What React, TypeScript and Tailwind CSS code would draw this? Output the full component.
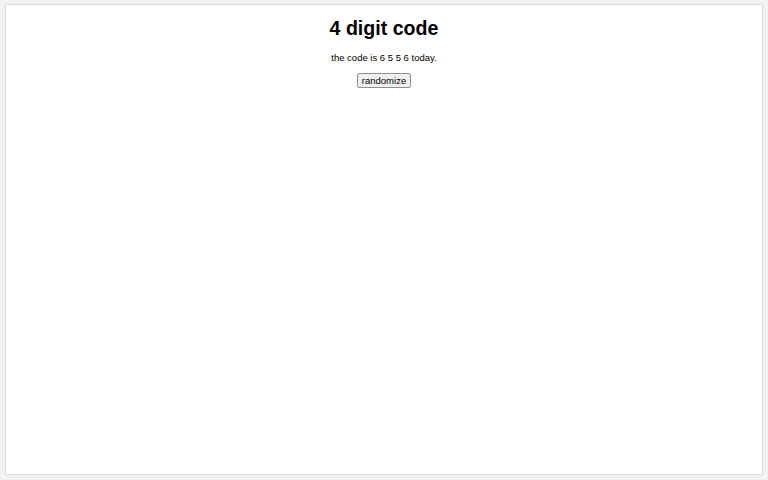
import React from "react";

export default function App() {
  return (
    <div className="w-[768px] h-[480px] bg-[#f2f2f2] p-[5px] pt-[4px] font-['Liberation_Sans',Arial,sans-serif]">
      <div className="h-full bg-white border border-[#dcdcdc] flex flex-col items-center text-black">
        <h1 className="mt-[11px] text-[19.6px] leading-[24px] font-bold">4 digit code</h1>
        <p className="mt-[12px] text-[9.5px] leading-[12px]">the code is 6 5 5 6 today.</p>
        <button className="mt-[9px] px-[4px] h-[15px] text-[9.5px] leading-[12px] bg-[#f0f0f0] border border-[#8f8f8f] rounded-[2px]">
          randomize
        </button>
      </div>
    </div>
  );
}
